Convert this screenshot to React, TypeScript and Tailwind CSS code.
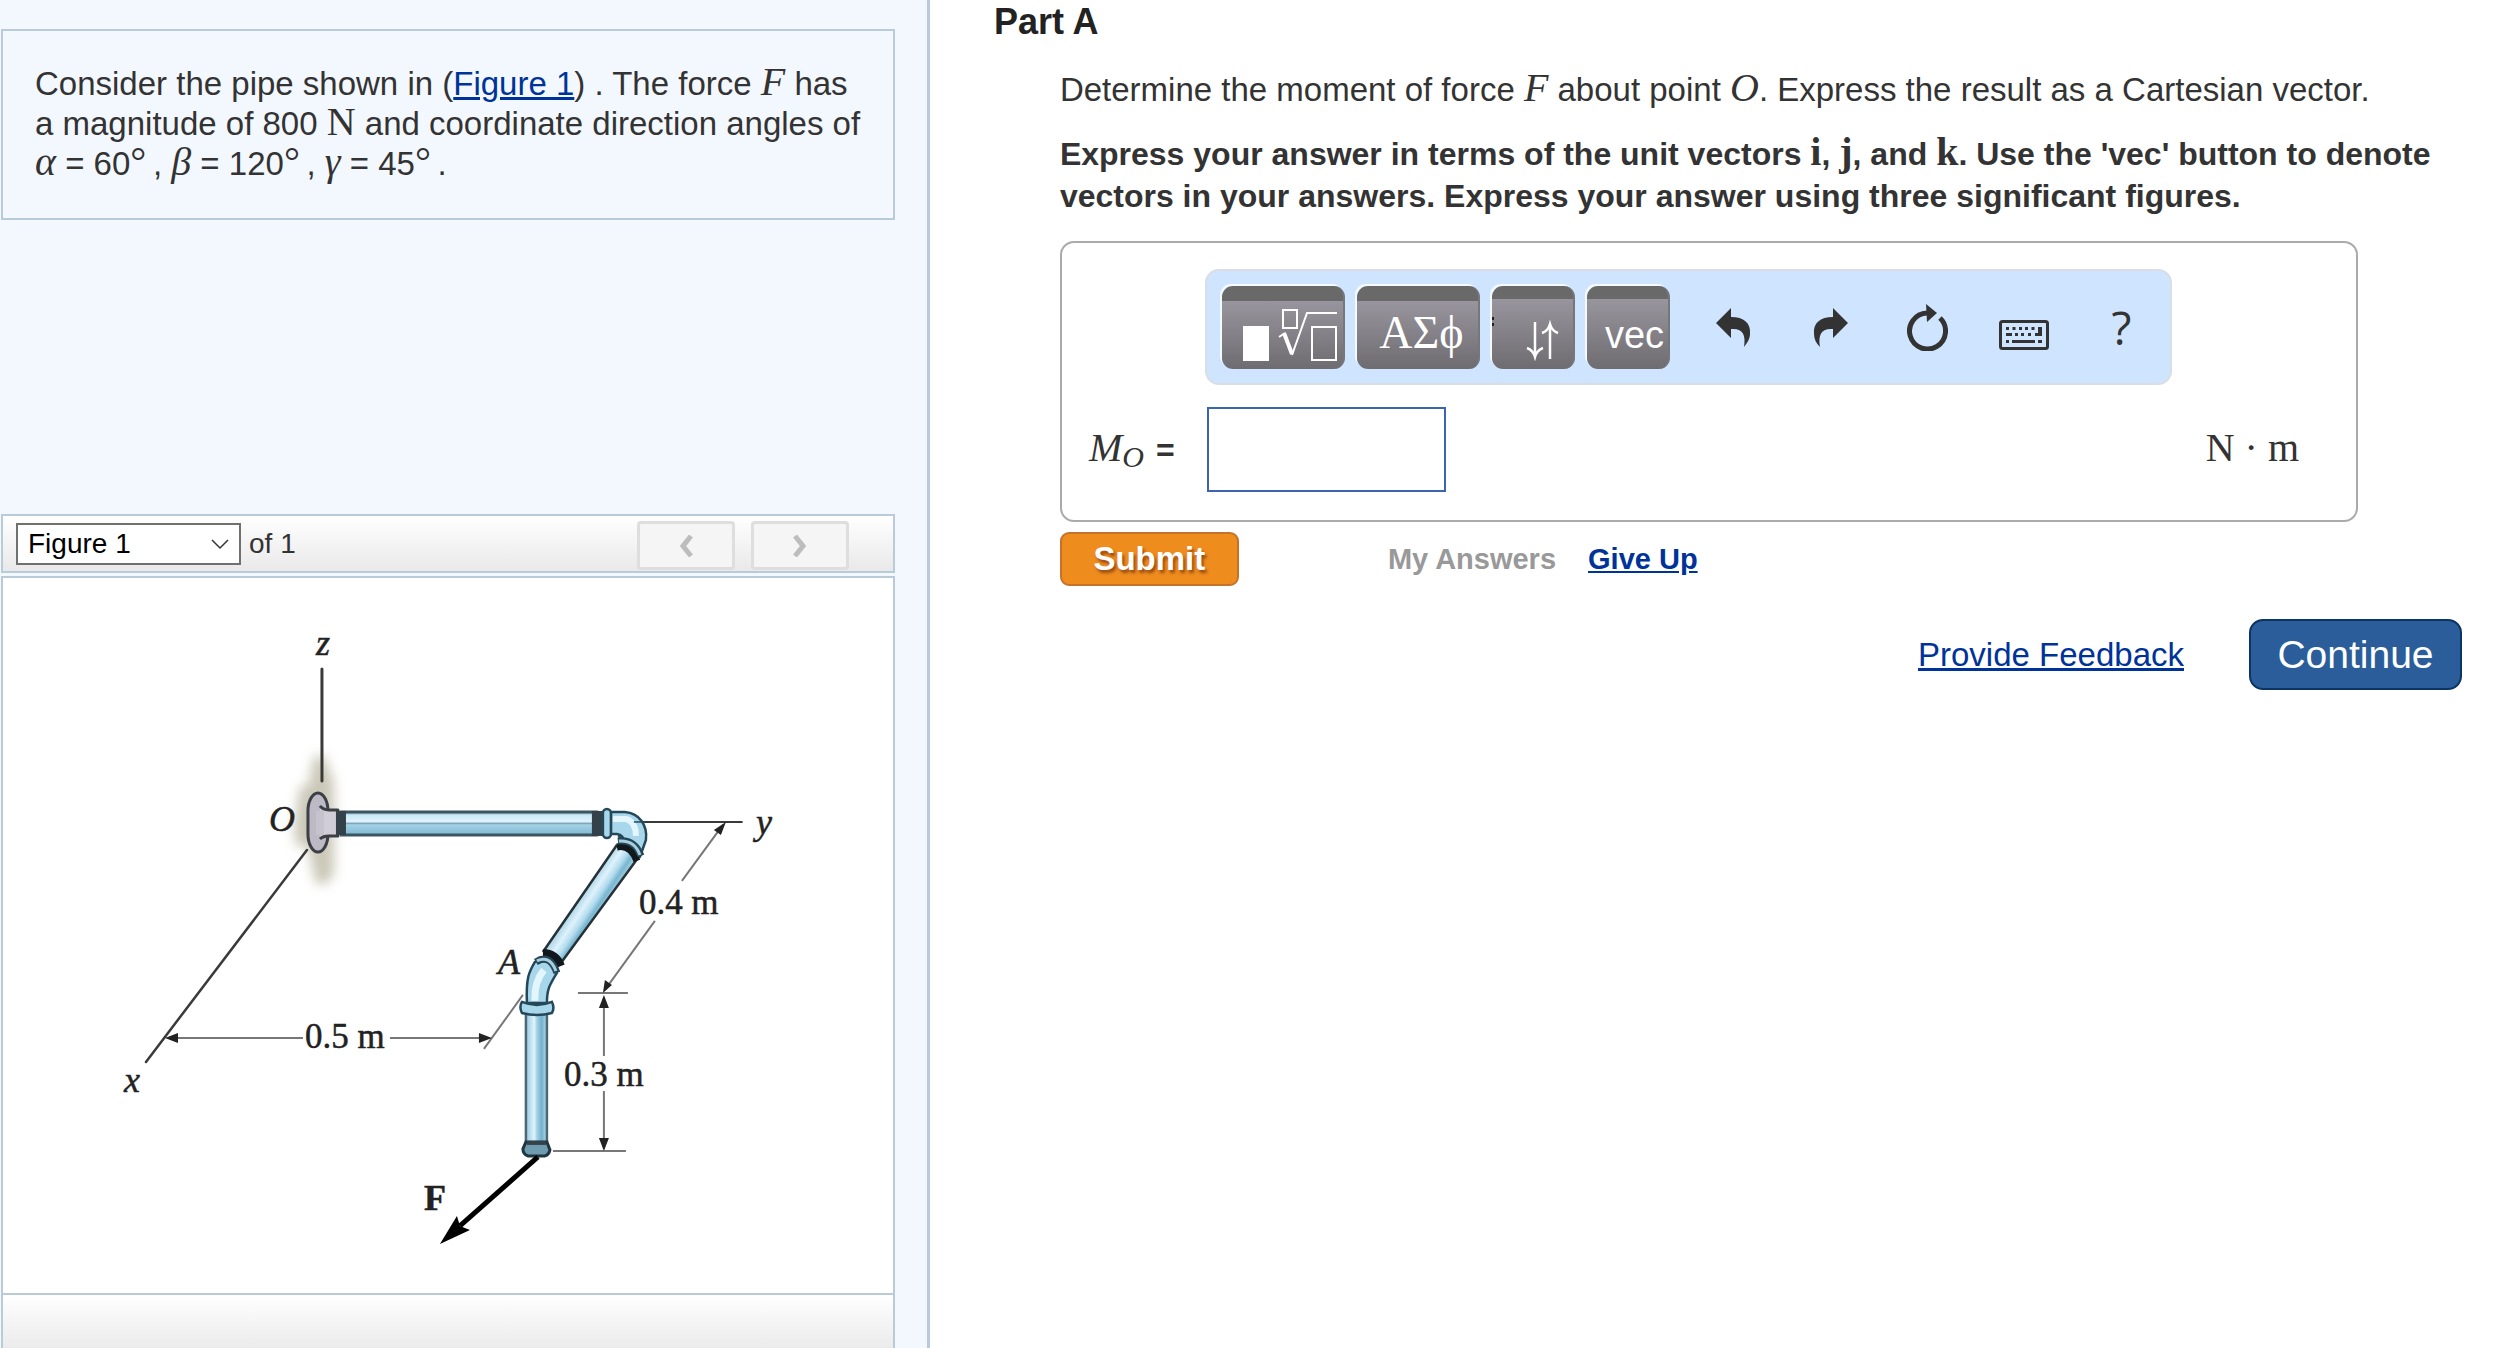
import { useState } from "react";
import type { ReactNode } from "react";

const SERIF = "font-['Liberation_Serif',serif]";

function Sym({ children, upright = false }: { children: ReactNode; upright?: boolean }) {
  return (
    <span className={`${SERIF} text-[40px] leading-[0] ${upright ? "" : "italic"}`}>{children}</span>
  );
}

function PipeFigure() {
  return (
    <svg viewBox="3 578 890 715" className="block w-full h-auto" role="img" aria-label="Pipe OA with force F">
      <defs>
        <filter id="soft" x="-50%" y="-50%" width="200%" height="200%">
          <feGaussianBlur stdDeviation="6" />
        </filter>
        <linearGradient id="pipeH" x1="0" y1="0" x2="0" y2="1">
          <stop offset="0" stopColor="#7fb0c6" />
          <stop offset="0.15" stopColor="#cbe9f8" />
          <stop offset="0.42" stopColor="#dff3fd" />
          <stop offset="0.5" stopColor="#7ea6b8" />
          <stop offset="0.56" stopColor="#a5d2e6" />
          <stop offset="1" stopColor="#7db8d2" />
        </linearGradient>
        <linearGradient id="pipeV" x1="0" y1="0" x2="1" y2="0">
          <stop offset="0" stopColor="#9bc9de" />
          <stop offset="0.2" stopColor="#b9dff0" />
          <stop offset="0.4" stopColor="#e0f3fc" />
          <stop offset="0.52" stopColor="#a4d2e5" />
          <stop offset="0.75" stopColor="#72b2cd" />
          <stop offset="1" stopColor="#b8dcec" />
        </linearGradient>
        <linearGradient id="pipeD" gradientUnits="userSpaceOnUse" x1="580" y1="897" x2="601" y2="911">
          <stop offset="0" stopColor="#a9d3e6" />
          <stop offset="0.35" stopColor="#def2fc" />
          <stop offset="0.6" stopColor="#b4dcee" />
          <stop offset="0.8" stopColor="#79b6d0" />
          <stop offset="1" stopColor="#9fcce0" />
        </linearGradient>
      </defs>

      {/* wall shadow */}
      <g fill="#b9b6a0" filter="url(#soft)" opacity="0.75">
        <path d="M314 756h10l10 26v92l-8 10h-10l-8-36v-60z" />
        <path d="M300 786h16v60h-20l-2-20z" />
      </g>

      {/* axes */}
      <g stroke="#3a3a3a" strokeWidth="3" strokeLinecap="round">
        <path d="M322 669v112" />
        <path d="M307 850L146 1062" strokeWidth="2.5" />
        <path d="M634 822h108" strokeWidth="2" />
      </g>

      {/* dimension lines */}
      <g stroke="#777" strokeWidth="2" fill="none">
        <path d="M723 825L682 881M655 921L605 990" />
        <path d="M578 993h50M553 1151h73" />
        <path d="M604 998v58M604 1091v58" />
        <path d="M168 1038h135M390 1038h99" />
        <path d="M523 995L484 1049" />
      </g>
      <g fill="#222">
        <path d="M726 822l-12 8 7 5zM603 993l2-13 7 5z" />
        <path d="M604 995l-5 13h10zM604 1151l-5-13h10z" />
        <path d="M165 1038l13-5v10zM492 1038l-13-5v10z" />
      </g>

      {/* flange at O */}
      <g stroke="#3c3f45" strokeWidth="3" strokeLinejoin="round">
        <rect x="308" y="793" width="20" height="59" rx="10" ry="18" fill="#bdbac6" />
        <path d="M320 806q3 4 9 4h9v26h-9q-6 0-9 3" fill="#d0cdd6" />
        <path d="M316 811h8v24h-8z" fill="#c6c3cd" stroke="none" />
      </g>

      {/* pipe from O to the corner */}
      <rect x="343" y="812" width="255" height="23" fill="url(#pipeH)" />
      <path d="M340 812h258M340 835h258" stroke="#3c5560" strokeWidth="3" />
      <rect x="336" y="811" width="10" height="24" fill="#34414a" />
      <rect x="592" y="811" width="11" height="25" fill="#34414a" />

      {/* diagonal pipe */}
      <path d="M617 845L543 952L561 963L638 858z" fill="url(#pipeD)" />
      <path d="M617 845L543 952M638 858L561 963" stroke="#263238" strokeWidth="2.5" />

      {/* corner elbow */}
      <g stroke="#24485a" strokeWidth="2.5" strokeLinejoin="round">
        <path d="M611 812h14c14 1 23 13 21 28l-6 17-17-9 1-6q0-7-7-8h-6z" fill="#a8d6ea" />
        <path d="M613 819h13q10 3 10 17" stroke="#e3f5fd" strokeWidth="6" fill="none" />
        <path d="M634 822h12" strokeWidth="1.5" />
        <path d="M619 835l4 8" strokeWidth="3" />
        <rect x="603" y="809" width="8" height="29" rx="4" fill="#a8d6ea" />
        <path d="M617 847q14-3 20 14" stroke="#10181c" strokeWidth="7" fill="none" />
        <path d="M618 841q17-2 23 15" stroke="#24485a" strokeWidth="7" fill="none" />
        <path d="M619 841q16-1 21 14" stroke="#a8cddd" strokeWidth="3" fill="none" />
      </g>

      {/* elbow at A */}
      <g strokeLinejoin="round">
        <path d="M543 953q13 0 18 13" stroke="#10181c" strokeWidth="8" fill="none" />
        <path d="M535 962c-6 10-9 16-8 41h20c0-13 2-17 10-30-3-12-12-18-22-11z" fill="#a8d6ea" stroke="#24485a" strokeWidth="2.5" />
        <path d="M544 970q-10 12-9 31" stroke="#e3f5fd" strokeWidth="7" fill="none" />
        <path d="M536 962q14-9 21 11" stroke="#24485a" strokeWidth="7" fill="none" />
        <path d="M537 961q13-6 19 10" stroke="#a8cddd" strokeWidth="3" fill="none" />
      </g>

      {/* vertical pipe */}
      <rect x="526" y="1013" width="21" height="130" fill="url(#pipeV)" />
      <path d="M526 1013v130M547 1013v130" stroke="#4a6773" strokeWidth="2.5" />
      <path d="M522 1002q15 6 30 0q3 6 0 11q-15 4-30 0q-3-6 0-11z" fill="#a8d6ea" stroke="#24485a" strokeWidth="2.5" />
      <path d="M526 1142h21l3 8q-1 5-5 6h-17q-5-2-5-7z" fill="#6f9bb0" stroke="#1f3540" strokeWidth="3" />
      <path d="M527 1143h19" stroke="#34414a" strokeWidth="4" />

      {/* force */}
      <path d="M538 1157L460 1226" stroke="#000" strokeWidth="5" />
      <path d="M440 1244l17-28 3 10 10 4z" fill="#000" />

      <g className={`${SERIF} text-[36px]`} fill="#222" stroke="#222" strokeWidth="0.5">
        <g className="italic">
          <text x="316" y="655">z</text>
          <text x="269" y="831">O</text>
          <text x="756" y="834">y</text>
          <text x="498" y="974">A</text>
          <text x="124" y="1092">x</text>
        </g>
        <text x="424" y="1210" className="font-bold">F</text>
        <g className="text-[35px]">
          <text x="639" y="914">0.4 m</text>
          <text x="305" y="1048">0.5 m</text>
          <text x="564" y="1086">0.3 m</text>
        </g>
      </g>
    </svg>
  );
}

const keyCap =
  "h-[83px] shrink-0 rounded-[11px] overflow-hidden text-white border-r-2 border-[#77777b] shadow-[-2px_-2px_0_#f4faff]";
const wideKey = `${keyCap} w-[123px] bg-[linear-gradient(#696969_15px,#98959e_15px,#6e6c70)]`;
const smallKey = `${keyCap} w-[83px] bg-[linear-gradient(#696969_13px,#98959e_13px,#6e6c70)]`;
const toolBtn = "w-[97px] h-full flex items-center justify-center";

function Toolbar() {
  return (
    <div className="w-fit h-[116px] pl-[15px] flex items-center bg-[#cfe5ff] border-2 border-[#d8dee4] rounded-[14px] text-[#333]">
      <div className="flex gap-3 mr-[15px]">
        <button className={wideKey} aria-label="Templates">
          <svg width="123" height="83" viewBox="0 0 123 83" fill="none" stroke="white" strokeWidth="2">
            <path d="M21 40h26v35H21z" fill="white" stroke="none" />
            <path d="M61 24h14v18H61z" />
            <path d="M57 51l6-4" />
            <path d="M62 47l8 21" strokeWidth="4" />
            <path d="M70 69l15-42h30" />
            <path d="M90 41h24v33H90z" />
          </svg>
        </button>
        <button className={`${wideKey} ${SERIF} pt-3 pl-2 text-[46px]`} aria-label="Symbols">ΑΣϕ</button>
        <button className={smallKey} aria-label="Subscript and superscript">
          <svg width="83" height="83" viewBox="0 0 83 83" fill="none" stroke="white" strokeWidth="2.5">
            <path d="M43 36v34M35 62q6 2 8 9q2-7 8-9" />
            <path d="M58 73V39M50 47q6-2 8-9q2 7 8 9" />
            <path d="M0 31h2v3H0zM0 37h2v3H0z" fill="#222" stroke="none" />
          </svg>
        </button>
        <button className={`${smallKey} pt-4 pl-[18px] text-left text-[38px]`}>vec</button>
      </div>
      <button className={toolBtn} aria-label="Undo">
        <svg width="35" height="40" viewBox="0 0 35 40" fill="currentColor">
          <path d="M0 16L15 1V10C28 10 35 16 34 27C34 32 31 36 28 40C30 28 27 21 15 22V31Z" />
        </svg>
      </button>
      <button className={toolBtn} aria-label="Redo">
        <svg width="35" height="40" viewBox="0 0 35 40" fill="currentColor">
          <path d="M35 16L20 1V10C7 10 0 16 1 27C1 32 3 36 7 40C5 28 8 21 20 22V31Z" />
        </svg>
      </button>
      <button className={toolBtn} aria-label="Reset">
        <svg width="42" height="47" viewBox="0 0 42 47">
          <path d="M34 14A18 18 0 1 1 21 9" fill="none" stroke="currentColor" strokeWidth="5" />
          <path d="M20 0L31 9L21 18Z" fill="currentColor" />
        </svg>
      </button>
      <button className={`${toolBtn} pt-4`} aria-label="Keyboard shortcuts">
        <svg width="50" height="30" viewBox="0 0 50 30">
          <rect x="1.5" y="1.5" width="47" height="27" rx="2" fill="none" stroke="currentColor" strokeWidth="3" />
          <path
            fill="currentColor"
            d="M7 7h3v3H7zM13.500 7h3v3h-3zM20 7h3v3h-3zM26 7h3v3h-3zM32.500 7h3v3h-3zM39 7h4v9h-7v-3h3zM7 13h6v3H7zM16 13h3v3h-3zM22 13h3v3h-3zM29 13h3v3h-3zM7 20h3v3H7zM13 20h23v3H13zM39 20h4v3h-4z"
          />
        </svg>
      </button>
      <button className={`${toolBtn} font-['Open_Sans',sans-serif] font-medium text-[46px]`} aria-label="Help">?</button>
    </div>
  );
}

const pager =
  "w-[98px] h-[49px] flex items-center justify-center rounded-[4px] border-3 border-[#dedede] bg-[#f5f5f5] text-[#bdbdbd]";

export default function App() {
  const [answer, setAnswer] = useState("");

  return (
    <div className="min-h-screen flex bg-white text-[#333] text-[33px] leading-10 font-['Liberation_Sans',sans-serif]">
      {/* Problem and figure */}
      <aside className="w-[37.3%] shrink-0 pl-[1px] pr-8 flex flex-col bg-[#f3f8ff] border-r-3 border-[#b9c9da]">
        <section className="mt-[29px] pt-[33px] pb-[34px] px-8 border-2 border-[#b9cad9]">
          <p className="whitespace-nowrap">
            Consider the pipe shown in (<a href="#figure" className="text-[#003399] underline">Figure 1</a>) . The force <Sym>F</Sym> has
            <br />
            a magnitude of 800 <Sym upright>N</Sym> and coordinate direction angles of
            <br />
            <Sym>α</Sym> = 60<Sym upright>°</Sym>&thinsp;, <Sym>β</Sym> = 120<Sym upright>°</Sym>&thinsp;, <Sym>γ</Sym> = 45<Sym upright>°</Sym>&thinsp;.
          </p>
        </section>

        <div className="mt-[294px] h-[59px] pl-[13px] pr-[44px] flex items-center border-2 border-[#b9cad9] bg-linear-to-b from-white to-[#e9e9e9] text-[28px]">
          <div className="relative flex">
            <select
              aria-label="Figure"
              className="w-[225px] h-[42px] pl-[10px] appearance-none bg-white border-2 border-[#707070] text-black leading-9"
            >
              <option>Figure 1</option>
            </select>
            <svg className="absolute right-3 top-4 pointer-events-none" width="18" height="11" viewBox="0 0 18 11" fill="none" stroke="#333" strokeWidth="1.5">
              <path d="M1 1l8 8 8-8" />
            </svg>
          </div>
          <span className="ml-2">of 1</span>
          <div className="ml-auto mt-1 flex gap-4">
            <button className={pager} aria-label="Previous figure">
              <svg width="14" height="22" viewBox="0 0 14 22" fill="none" stroke="currentColor" strokeWidth="5">
                <path d="M12 1L4 11l8 10" />
              </svg>
            </button>
            <button className={pager} aria-label="Next figure">
              <svg width="14" height="22" viewBox="0 0 14 22" fill="none" stroke="currentColor" strokeWidth="5">
                <path d="M2 1l8 10-8 10" />
              </svg>
            </button>
          </div>
        </div>

        <div id="figure" className="mt-[3px] border-2 border-[#b9cad9] bg-white">
          <PipeFigure />
        </div>
        <div className="flex-1 border-x-2 border-[#b9cad9] bg-linear-to-b from-white to-[#ebebeb]" />
      </aside>

      {/* Question */}
      <main className="flex-1 pt-[2px] pl-[64px] pr-[31px]">
        <h1 className="text-[36px] font-bold text-[#222]">Part A</h1>
        <div className="pl-[66px]">
          <p className="mt-7">
            Determine the moment of force <Sym>F</Sym> about point <Sym>O</Sym>. Express the result as a Cartesian vector.
          </p>
          <p className="mt-[23px] font-bold text-[32px] leading-[42px]">
            Express your answer in terms of the unit vectors <Sym upright>i</Sym>, <Sym upright>j</Sym>, and <Sym upright>k</Sym>. Use the 'vec' button to denote vectors in your answers. Express your answer using three significant figures.
          </p>

          <form onSubmit={(e) => e.preventDefault()}>
            <div className="mt-6 mr-[104px] pt-[26px] pb-[28px] border-2 border-[#aaa] rounded-[14px]">
              <div className="pl-[143px]">
                <Toolbar />
              </div>
              <div className="mt-[22px] pl-[27px] pr-[57px] flex items-center">
                <label htmlFor="moment" className="w-[118px] whitespace-nowrap">
                  <Sym>M</Sym>
                  <sub className={`${SERIF} italic text-[30px] leading-[0] bottom-[-6px]`}>O</sub>
                  <b className="ml-3 text-[32px]">=</b>
                </label>
                <input
                  id="moment"
                  value={answer}
                  onChange={(e) => setAnswer(e.target.value)}
                  className="w-[239px] h-[85px] px-3 border-2 border-[#3c63b4] bg-white outline-none"
                />
                <span className="ml-auto">
                  <Sym upright>N · m</Sym>
                </span>
              </div>
            </div>

            <div className="mt-[10px] flex items-center text-[29px] font-bold">
              <button
                type="submit"
                className="w-[179px] h-[54px] rounded-[9px] border-2 border-[#c4722c] bg-[#ee8c1e] text-white text-[33px] [text-shadow:2px_3px_3px_#9a4a10]"
              >
                Submit
              </button>
              <span className="ml-[149px] text-[#999]">My Answers</span>
              <a href="#give-up" className="ml-8 text-[#003399] underline">Give Up</a>
            </div>
          </form>
        </div>

        <div className="mt-[33px] flex items-center justify-end gap-[65px]">
          <a href="#feedback" className="text-[#003399] underline">Provide Feedback</a>
          <button className="w-[213px] h-[71px] rounded-[14px] border-2 border-[#0c3463] bg-[#2b5d9b] text-white text-[39px]">
            Continue
          </button>
        </div>
      </main>
    </div>
  );
}
